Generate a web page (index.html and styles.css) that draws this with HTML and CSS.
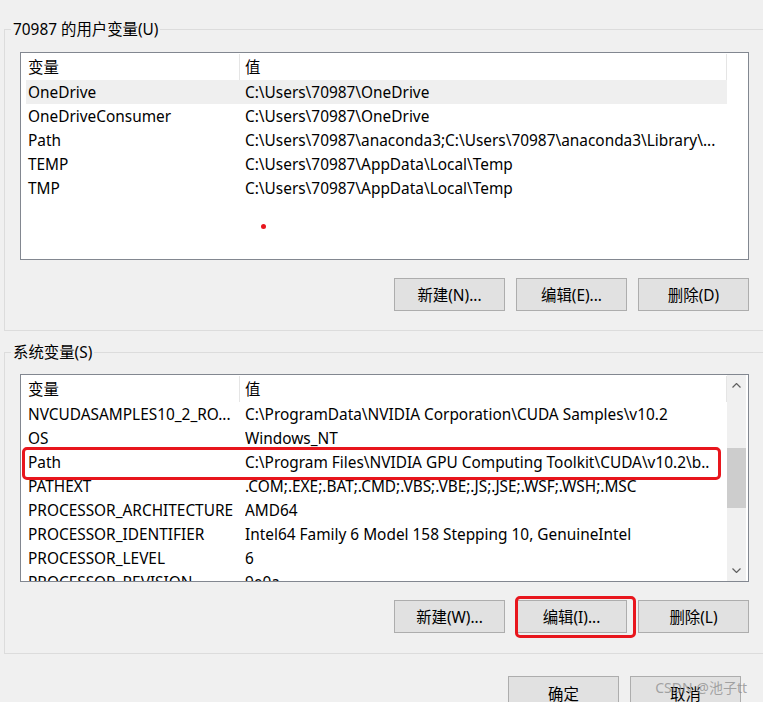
FILE: index.html
```html
<!DOCTYPE html>
<html lang="zh-CN">
<head>
    <meta charset="UTF-8">
    <title>环境变量</title>
    <link rel="stylesheet" href="styles.css">
</head>
<body>
    <fieldset class="group group-user">
        <legend>70987 的用户变量(U)</legend>
        <div class="list">
            <div class="list-main">
                <div class="list-head">
                    <span class="head-name">变量</span>
                    <span class="head-value">值</span>
                </div>
                <div class="row hover"><span class="col-name">OneDrive</span><span class="col-value">C:\Users\70987\OneDrive</span></div>
                <div class="row"><span class="col-name">OneDriveConsumer</span><span class="col-value">C:\Users\70987\OneDrive</span></div>
                <div class="row"><span class="col-name">Path</span><span class="col-value">C:\Users\70987\anaconda3;C:\Users\70987\anaconda3\Library\...</span></div>
                <div class="row"><span class="col-name">TEMP</span><span class="col-value">C:\Users\70987\AppData\Local\Temp</span></div>
                <div class="row"><span class="col-name">TMP</span><span class="col-value">C:\Users\70987\AppData\Local\Temp</span></div>
            </div>
            <div class="list-side"></div>
            <span class="dot"></span>
        </div>
        <div class="actions">
            <button type="button">新建(N)...</button>
            <button type="button">编辑(E)...</button>
            <button type="button">删除(D)</button>
        </div>
    </fieldset>

    <fieldset class="group group-system">
        <legend>系统变量(S)</legend>
        <div class="list">
            <div class="list-main">
                <div class="list-head">
                    <span class="head-name">变量</span>
                    <span class="head-value">值</span>
                </div>
                <div class="row"><span class="col-name">NVCUDASAMPLES10_2_RO...</span><span class="col-value">C:\ProgramData\NVIDIA Corporation\CUDA Samples\v10.2</span></div>
                <div class="row"><span class="col-name">OS</span><span class="col-value">Windows_NT</span></div>
                <div class="row marked"><span class="col-name">Path</span><span class="col-value">C:\Program Files\NVIDIA GPU Computing Toolkit\CUDA\v10.2\b..</span></div>
                <div class="row"><span class="col-name">PATHEXT</span><span class="col-value">.COM;.EXE;.BAT;.CMD;.VBS;.VBE;.JS;.JSE;.WSF;.WSH;.MSC</span></div>
                <div class="row"><span class="col-name">PROCESSOR_ARCHITECTURE</span><span class="col-value">AMD64</span></div>
                <div class="row"><span class="col-name">PROCESSOR_IDENTIFIER</span><span class="col-value">Intel64 Family 6 Model 158 Stepping 10, GenuineIntel</span></div>
                <div class="row"><span class="col-name">PROCESSOR_LEVEL</span><span class="col-value">6</span></div>
                <div class="row"><span class="col-name">PROCESSOR_REVISION</span><span class="col-value">9e0a</span></div>
            </div>
            <div class="list-side scrollbar">
                <div class="scroll-btn">
                    <svg width="9" height="5" viewBox="0 0 9 5"><polyline points="0.5,4.5 4.5,0.5 8.5,4.5" fill="none" stroke="#606060" stroke-width="1.2"/></svg>
                </div>
                <div class="scroll-track"><div class="scroll-thumb"></div></div>
                <div class="scroll-btn">
                    <svg width="9" height="5" viewBox="0 0 9 5"><polyline points="0.5,0.5 4.5,4.5 8.5,0.5" fill="none" stroke="#606060" stroke-width="1.2"/></svg>
                </div>
            </div>
        </div>
        <div class="actions">
            <button type="button">新建(W)...</button>
            <button type="button" class="marked">编辑(I)...</button>
            <button type="button">删除(L)</button>
        </div>
    </fieldset>

    <div class="dialog-actions">
        <button type="button">确定</button>
        <button type="button">取消</button>
    </div>

    <span class="watermark">CSDN @池子tt</span>
</body>
</html>
```

FILE: styles.css
```css
body {
    margin: 0;
    height: 702px;
    overflow: hidden;
    position: relative;
    background-color: #f0f0f0;
    font-family: "Noto Sans", "Noto Sans CJK SC", sans-serif;
    font-size: 15.4px;
    color: #000;
}

/* group boxes */
.group {
    width: 790px;
    min-width: 0;
    margin: 19px 0 0 4px;
    padding: 13px 0 19px 15px;
    border: 1px solid #dcdcdc;
}

.group legend {
    margin-left: -9px;
    padding: 0 2px;
    line-height: 21px;
}

.group-system {
    margin-top: 11px;
    padding-top: 11px;
    padding-bottom: 20px;
}

.group-user {
    padding-top: 12px;
}

/* list views */
.list {
    position: relative;
    display: flex;
    width: 729px;
    height: 208px;
    box-sizing: border-box;
    border: 1px solid #828790;
    background-color: white;
}

.list-main {
    width: 706px;
    overflow: hidden;
}

.list-head {
    display: flex;
    height: 26px;
    padding-top: 1px;
    line-height: 27px;
}

.head-name {
    width: 211px;
    padding-left: 7px;
    border-right: 1px solid #e5e5e5;
}

.head-value {
    width: 481px;
    padding-left: 5px;
    border-right: 1px solid #e5e5e5;
}

.row {
    display: grid;
    grid-template-columns: 219px 1fr;
    margin-left: 5px;
    height: 23px;
    padding-top: 1px;
    line-height: 24px;
    white-space: nowrap;
}

.row.hover {
    background-color: #efefef;
}

.col-name {
    padding-left: 2px;
    overflow: hidden;
}

.col-value {
    overflow: hidden;
}

.row.marked {
    position: relative;
}

.row.marked::after {
    content: "";
    position: absolute;
    left: -4px;
    right: 6px;
    top: -3px;
    bottom: -6px;
    border: 3px solid #e8161d;
    border-radius: 5px;
}

.list-side {
    width: 21px;
}

.scrollbar {
    display: flex;
    flex-direction: column;
    width: 19px;
    margin-right: 2px;
    background-color: #f0f0f0;
}

.scroll-btn {
    height: 21px;
    display: flex;
    align-items: center;
    justify-content: center;
}

.scroll-track {
    flex: 1;
}

.scroll-thumb {
    margin-top: 52px;
    height: 60px;
    background-color: #cdcdcd;
}

.dot {
    position: absolute;
    left: 240px;
    top: 171px;
    width: 5px;
    height: 5px;
    border-radius: 50%;
    background-color: #e8161d;
}

/* buttons */
.actions {
    display: flex;
    justify-content: flex-end;
    gap: 11px;
    width: 729px;
    margin-top: 18px;
}

button {
    width: 111px;
    height: 33px;
    padding: 0;
    border: 1px solid #adadad;
    background-color: #e1e1e1;
    font-family: inherit;
    font-size: 15.4px;
    color: #000;
}

button.marked {
    position: relative;
}

button.marked::after {
    content: "";
    position: absolute;
    left: -2px;
    right: -10px;
    top: -5px;
    bottom: -6px;
    border: 3px solid #e8161d;
    border-radius: 5px;
}

.dialog-actions {
    display: flex;
    justify-content: flex-end;
    gap: 11px;
    margin-top: 22px;
    padding-right: 22px;
}

.dialog-actions button {
    height: 34px;
}

.watermark {
    position: absolute;
    right: 16px;
    bottom: 5px;
    font-size: 14px;
    color: rgba(140, 140, 140, 0.75);
}
```
